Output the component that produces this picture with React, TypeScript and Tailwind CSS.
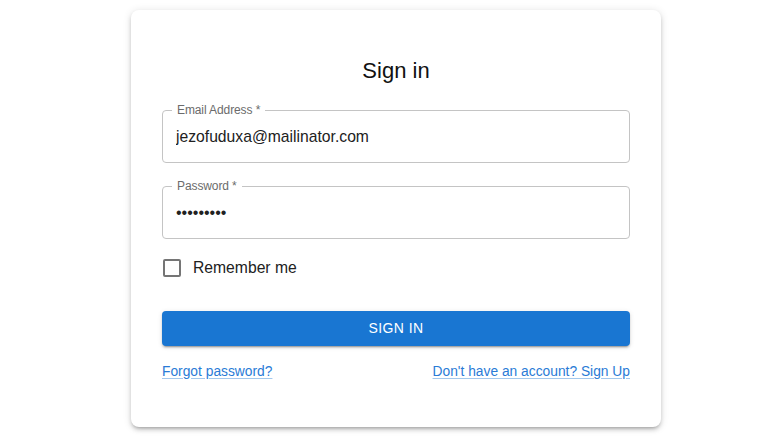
export default function App() {
  return (
    <div className="min-h-[446px] bg-white pt-[10px] font-['Liberation_Sans',Arial,sans-serif] text-[#212121]">
      {/* Sign in card */}
      <div className="ml-[131px] flex w-[530px] flex-col rounded-lg bg-white px-[31px] pt-[46px] pb-[45px] shadow-[0px_3px_3px_-2px_rgba(0,0,0,0.2),0px_3px_4px_0px_rgba(0,0,0,0.14),0px_1px_8px_0px_rgba(0,0,0,0.12)]">
        <h1 className="text-center text-[22px] leading-[30px] font-normal text-[#111]">
          Sign in
        </h1>

        {/* Email field */}
        <div className="relative mt-[24px] h-[53px] rounded border border-[#c4c4c4]">
          <span className="absolute -top-[8px] left-[9px] bg-white px-[5px] text-[12px] leading-[14px] tracking-[-0.1px] text-[#6b6b6b]">
            Email Address *
          </span>
          <input
            type="email"
            readOnly
            defaultValue="jezofuduxa@mailinator.com"
            className="h-full w-full rounded bg-transparent px-[13px] text-[15.7px] text-[#212121] outline-none"
          />
        </div>

        {/* Password field */}
        <div className="relative mt-[23px] h-[53px] rounded border border-[#c4c4c4]">
          <span className="absolute -top-[8px] left-[9px] bg-white px-[5px] text-[12px] leading-[14px] tracking-[-0.1px] text-[#6b6b6b]">
            Password *
          </span>
          <input
            type="password"
            readOnly
            defaultValue="123456789"
            className="h-full w-full rounded bg-transparent px-[13px] text-[16px] text-[#212121] outline-none"
          />
        </div>

        {/* Remember me */}
        <label className="mt-[10px] flex h-[38px] items-center gap-[12px] pl-[1px]">
          <span className="h-[18px] w-[18px] rounded-[2px] border-2 border-[#757575]" />
          <span className="text-[15.7px] text-[#212121]">Remember me</span>
        </label>

        <button className="mt-[24px] h-[35px] w-full rounded bg-[#1976d2] text-[14px] font-medium tracking-[0.4px] text-white uppercase shadow-[0px_3px_1px_-2px_rgba(0,0,0,0.2),0px_2px_2px_0px_rgba(0,0,0,0.14),0px_1px_5px_0px_rgba(0,0,0,0.12)]">
          Sign In
        </button>

        <div className="mt-[16px] flex items-center justify-between text-[13.8px] leading-[20px]">
          <a href="#" className="text-[#2a7bd6] underline decoration-[#1976d2]/40 underline-offset-2">
            Forgot password?
          </a>
          <a href="#" className="text-[#2a7bd6] underline decoration-[#1976d2]/40 underline-offset-2">
            Don't have an account? Sign Up
          </a>
        </div>
      </div>
    </div>
  );
}
